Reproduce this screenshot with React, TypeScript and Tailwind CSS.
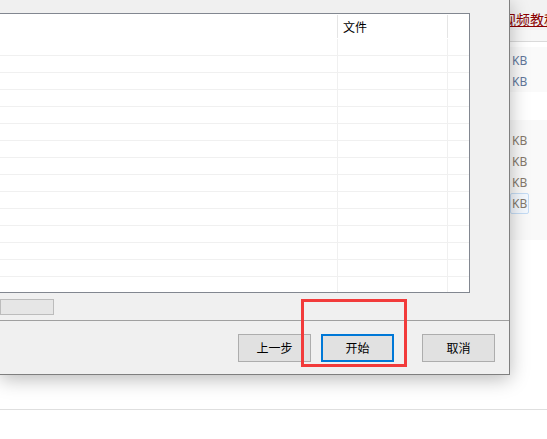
import React from 'react';

const cjk = { fontFamily: '"Noto Sans CJK SC", "Noto Sans", sans-serif' };

function ListRow() {
    return (
        <div className="flex h-[17px] shrink-0 border-b border-[#f0f0f0]">
            <div className="w-[337px] shrink-0" />
            <div className="w-[110px] shrink-0 border-l border-[#f0f0f0]" />
            <div className="w-[21px] shrink-0 border-l border-[#f0f0f0]" />
        </div>
    );
}

function Button({ label, primary = false }: { label: string; primary?: boolean }) {
    return (
        <button
            className={`w-[73px] h-[28px] bg-[#e1e1e1] text-[12px] text-black leading-none flex items-center justify-center ${
                primary ? 'border-2 border-[#0078d7]' : 'border border-[#adadad]'
            }`}
            style={cjk}
        >
            {label}
        </button>
    );
}

function SizeCell({ selected = false, color }: { selected?: boolean; color: string }) {
    return (
        <div className="h-[21px] pl-[8px] flex">
            <span
                className={`h-[21px] px-[1px] border rounded-[2px] text-[12px] leading-[19px] ${color} ${
                    selected ? 'border-[#c4dcf5] bg-[#f3f8fe]' : 'border-transparent'
                }`}
                style={{ fontFamily: '"Noto Sans", sans-serif' }}
            >
                KB
            </span>
        </div>
    );
}

export default function App() {
    const rows = Array.from({ length: 15 });

    return (
        <div className="relative w-[547px] h-[439px] bg-white overflow-hidden">
            {/* page behind the dialog */}
            <div className="h-[410px] border-b border-[#dfdfdf] flex">
                <div className="w-[502px] shrink-0" />
                <div className="flex-1 flex flex-col">
                    <div className="h-[42px] border-b border-[#dadada] flex flex-col">
                        <div className="h-[30px] bg-[#f2f2f2] pt-[7px]">
                            <span
                                className="text-[14px] leading-[16px] text-[#8b0000] underline whitespace-nowrap"
                                style={cjk}
                            >
                                视频教程
                            </span>
                        </div>
                        <div className="flex-1 bg-[#f7f7f7]" />
                    </div>
                    <div className="mt-[5px] pt-[3px] h-[45px] bg-[#fafafa]">
                        <SizeCell color="text-[#62779a]" />
                        <SizeCell color="text-[#62779a]" />
                    </div>
                    <div className="mt-[28px] pt-[10px] h-[120px] bg-[#f9f9f9]">
                        <SizeCell color="text-[#84786b]" />
                        <SizeCell color="text-[#84786b]" />
                        <SizeCell color="text-[#84786b]" />
                        <SizeCell color="text-[#84786b]" selected />
                    </div>
                </div>
            </div>

            {/* dialog window */}
            <div className="absolute left-0 top-0 w-[510px] h-[375px] bg-[#f0f0f0] border-r border-b border-[#7f7f7f] shadow-[0_4px_18px_rgba(0,0,0,0.28)] flex flex-col">
                <div className="h-[13px] shrink-0" />

                {/* file list */}
                <div className="w-[470px] h-[280px] shrink-0 bg-white border-t border-r border-b border-[#828790] overflow-hidden flex flex-col">
                    <div className="h-[25px] shrink-0 flex">
                        <div className="w-[337px] shrink-0" />
                        <div className="w-px h-[23px] mt-px bg-[#e5e5e5]" />
                        <div className="w-[109px] shrink-0 pl-[5px] flex items-center text-[12px] text-black" style={cjk}>
                            文件
                        </div>
                        <div className="w-px h-[23px] mt-px bg-[#e5e5e5]" />
                    </div>
                    {rows.map((_, i) => (
                        <ListRow key={i} />
                    ))}
                </div>

                <div className="h-[27px] shrink-0 pt-[6px]">
                    <div className="w-[54px] h-[16px] border border-[#bcbcbc] bg-[#e6e6e6]" />
                </div>

                <div className="border-t border-[#a0a0a0] flex-1 pt-[13px] pl-[238px] flex items-start">
                    <Button label="上一步" />
                    <div className="w-[10px]" />
                    <Button label="开始" primary />
                    <div className="w-[28px]" />
                    <Button label="取消" />
                </div>
            </div>

            {/* annotation */}
            <div className="absolute left-[301px] top-[299px] w-[106px] h-[68px] border-[3px] border-[#f23b3b]" />
        </div>
    );
}
